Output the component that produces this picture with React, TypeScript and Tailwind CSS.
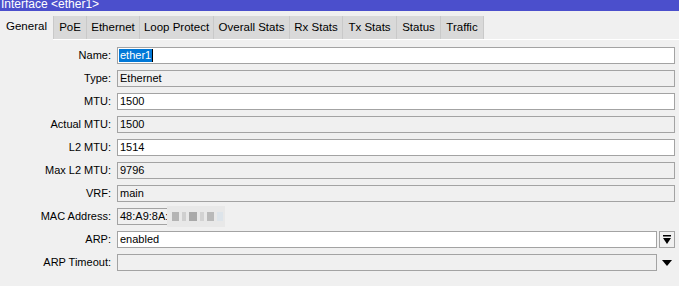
import React from "react";

type Field = {
  label: string;
  value: string;
  editable?: boolean;
};

const tabs = [
  { name: "PoE", w: "w-[33px]" },
  { name: "Ethernet", w: "w-[53px]" },
  { name: "Loop Protect", w: "w-[74px]" },
  { name: "Overall Stats", w: "w-[76px]" },
  { name: "Rx Stats", w: "w-[53px]" },
  { name: "Tx Stats", w: "w-[54px]" },
  { name: "Status", w: "w-[44px]" },
  { name: "Traffic", w: "w-[43px]" },
];

const fields: Field[] = [
  { label: "Type:", value: "Ethernet" },
  { label: "MTU:", value: "1500", editable: true },
  { label: "Actual MTU:", value: "1500" },
  { label: "L2 MTU:", value: "1514", editable: true },
  { label: "Max L2 MTU:", value: "9796" },
  { label: "VRF:", value: "main" },
];

function Label({ children }: { children: React.ReactNode }) {
  return <div className="w-[111px] shrink-0 text-right leading-[17px]">{children}</div>;
}

function Box({ value, editable }: { value: string; editable?: boolean }) {
  return (
    <div
      className={`flex-1 h-[17px] border border-[#a3a3a3] pl-[2px] leading-[15px] ${
        editable ? "bg-white" : "bg-[#f0f0f0]"
      }`}
    >
      {value}
    </div>
  );
}

export default function App() {
  return (
    <div className="w-[679px] h-[286px] overflow-hidden bg-[#f0f0f0] text-[11px] text-black font-['Liberation_Sans',Arial,sans-serif]">
      {/* window title, clipped at the top */}
      <div className="h-[11px] overflow-hidden bg-[#4b4fcc]">
        <div className="-mt-[3px] pl-[1px] text-[12px] leading-[14px] text-white">Interface &lt;ether1&gt;</div>
      </div>

      {/* tabs */}
      <div className="flex h-[29px] items-end border-b border-white">
        <div className="z-10 -mb-px flex h-[27px] w-[53px] items-center justify-center bg-[#f0f0f0] text-[11.5px]">
          General
        </div>
        {tabs.map((t) => (
          <div
            key={t.name}
            className={`flex h-[23px] ${t.w} items-center justify-center border-l border-[#c9c9c9] bg-[#d9d9d9] text-[11.5px]`}
          >
            {t.name}
          </div>
        ))}
        <div className="h-[23px] border-l border-[#c9c9c9]" />
      </div>

      {/* form */}
      <div className="flex flex-col gap-[6px] pt-[7px] pr-[4px]">
        <div className="flex items-center gap-[6px]">
          <Label>Name:</Label>
          <div className="flex h-[17px] flex-1 items-center border border-[#a3a3a3] bg-white pl-px">
            <span className="bg-[#0078d7] px-px leading-[13px] text-white">ether1</span>
            <span className="h-[13px] w-px bg-black" />
          </div>
        </div>

        {fields.map((f) => (
          <div key={f.label} className="flex items-center gap-[6px]">
            <Label>{f.label}</Label>
            <Box value={f.value} editable={f.editable} />
          </div>
        ))}

        <div className="flex h-[17px] items-center gap-[6px]">
          <Label>MAC Address:</Label>
          <div className="flex flex-1 items-center">
            <div className="h-[17px] w-[50px] border-y border-l border-[#a3a3a3] pl-[2px] leading-[15px]">48:A9:8A:</div>
            {/* redacted part */}
            <div className="-my-[2px] flex h-[21px] w-[58px] items-center gap-[3px] bg-[#e8e8e8] pl-[5px]">
              <div className="h-[9px] w-[7px] bg-[#b4b4b4]" />
              <div className="h-[9px] w-[4px] bg-[#cfcfcf]" />
              <div className="h-[9px] w-[8px] bg-[#a9a9a9]" />
              <div className="h-[9px] w-[4px] bg-[#d2d2d2]" />
              <div className="h-[9px] w-[7px] bg-[#b9b9b9]" />
              <div className="h-[9px] w-[6px] bg-[#dde4ea]" />
            </div>
          </div>
        </div>

        <div className="flex items-center gap-[6px]">
          <Label>ARP:</Label>
          <div className="flex flex-1 items-center gap-[2px]">
            <Box value="enabled" editable />
            <div className="flex h-[17px] w-[16px] items-center justify-center border border-[#a3a3a3] bg-[#f0f0f0]">
              <svg width="8" height="10" viewBox="0 0 8 10">
                <rect x="0" y="0" width="8" height="1.5" fill="#000" />
                <polygon points="0,3 8,3 4,9" fill="#000" />
              </svg>
            </div>
          </div>
        </div>

        <div className="flex items-center gap-[6px]">
          <Label>ARP Timeout:</Label>
          <div className="flex flex-1 items-center gap-[2px]">
            <Box value="" />
            <div className="flex h-[17px] w-[16px] items-center justify-center">
              <svg width="10" height="6" viewBox="0 0 10 6">
                <polygon points="0,0 10,0 5,6" fill="#000" />
              </svg>
            </div>
          </div>
        </div>
      </div>
    </div>
  );
}
